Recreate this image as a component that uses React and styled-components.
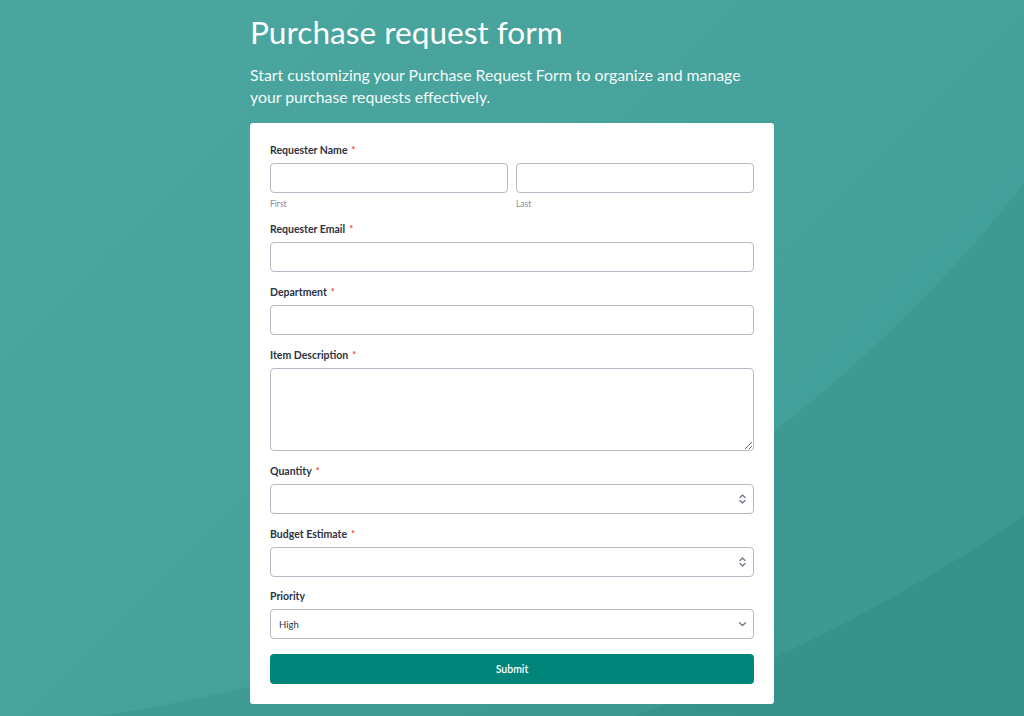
import React from "react";
import styled, { createGlobalStyle } from "styled-components";

const Global = createGlobalStyle`
  * { box-sizing: border-box; }
  html, body { margin: 0; padding: 0; }
  body { font-family: Lato, "Open Sans", sans-serif; }
`;

const Page = styled.div`
  min-height: 100vh;
  width: 100%;
  background:
    radial-gradient(circle 1830px at 0px -1000px, transparent 1829px, rgba(40, 130, 122, 0.3) 1830px),
    radial-gradient(circle 1430px at -100px -700px, transparent 1429px, rgba(50, 138, 130, 0.3) 1430px),
    linear-gradient(135deg, #4ba69e 0%, #47a39c 40%, #42a09a 70%, #3f9d96 100%);
  display: flex;
  justify-content: center;
  padding: 12px 0 12px;
`;

const Column = styled.main`
  width: 524px;
  display: flex;
  flex-direction: column;
`;

const Title = styled.h1`
  margin: 0;
  font-family: Lato, sans-serif;
  font-weight: 400;
  font-size: 31.6px;
  line-height: 40px;
  color: #ffffff;
`;

const Subtitle = styled.p`
  margin: 12px 0 15px;
  font-family: Lato, sans-serif;
  font-size: 15.8px;
  line-height: 22px;
  color: #f4fbfa;
  max-width: 500px;
`;

const Card = styled.form`
  background: #ffffff;
  border-radius: 3px;
  padding: 20px 20px 20px;
  display: flex;
  flex-direction: column;
  gap: 13px;
`;

const Field = styled.div`
  display: flex;
  flex-direction: column;
  margin-top: ${(p) => (p.$tight ? "-1px" : "0")};
`;

const Label = styled.label`
  display: block;
  font-family: Lato, sans-serif;
  font-weight: 700;
  font-size: 10.5px;
  line-height: 14px;
  height: 14px;
  color: #2c3345;
  margin-bottom: 6px;
`;

const Req = styled.span`
  color: #f23a3c;
  font-size: 9px;
  line-height: 0;
  margin-left: 4px;
  vertical-align: 1px;
`;

const Split = styled.div`
  display: grid;
  grid-template-columns: 1fr 1fr;
  gap: 8px;
`;

const Sub = styled.div`
  display: flex;
  flex-direction: column;
`;

const SubLabel = styled.span`
  font-family: Lato, sans-serif;
  font-size: 8.5px;
  line-height: 10px;
  margin-top: 6px;
  color: #868aa0;
`;

const Input = styled.input`
  height: 30px;
  width: 100%;
  border: 1px solid #b6bac7;
  border-radius: 4px;
  background: #fff;
  padding: 0 9px;
  font-family: Lato, sans-serif;
  font-size: 10px;
  color: #2c3345;
  outline: none;
  display: block;
`;

const TextArea = styled.textarea`
  height: 83px;
  width: 100%;
  border: 1px solid #b6bac7;
  border-radius: 4px;
  background: #fff;
  padding: 8px 9px;
  font-family: Lato, sans-serif;
  font-size: 10px;
  resize: vertical;
  outline: none;
  display: block;
`;

const Control = styled.div`
  height: 30px;
  border: 1px solid #b6bac7;
  border-radius: 4px;
  background: #fff;
  display: flex;
  align-items: center;
  justify-content: space-between;
  padding: 0 6px 0 8px;
  font-family: Lato, sans-serif;
  font-size: 9.5px;
  color: #2c3345;
`;

const Icon = styled.svg`
  width: 9px;
  height: 12px;
  color: #6f7688;
  flex: none;
`;

const Button = styled.button`
  margin-top: 2px;
  height: 30px;
  border: none;
  border-radius: 4px;
  background: #00857a;
  color: #ffffff;
  font-family: Lato, sans-serif;
  font-weight: 600;
  font-size: 10.5px;
  cursor: pointer;
`;

const Spinner = () => (
  <Icon viewBox="0 0 9 12" fill="none" stroke="currentColor" strokeWidth="1.3" strokeLinecap="round" strokeLinejoin="round">
    <path d="M2 4.5 L4.5 2 L7 4.5" />
    <path d="M2 7.5 L4.5 10 L7 7.5" />
  </Icon>
);

const Chevron = () => (
  <Icon viewBox="0 0 9 12" fill="none" stroke="currentColor" strokeWidth="1.3" strokeLinecap="round" strokeLinejoin="round">
    <path d="M1.5 4.8 L4.5 7.6 L7.5 4.8" />
  </Icon>
);

const FieldLabel = ({ children, required }) => (
  <Label>
    {children}
    {required && <Req>*</Req>}
  </Label>
);

export default function App() {
  return (
    <>
      <Global />
      <Page>
        <Column>
          <Title>Purchase request form</Title>
          <Subtitle>
            Start customizing your Purchase Request Form to organize and manage your purchase requests effectively.
          </Subtitle>
          <Card onSubmit={(e) => e.preventDefault()}>
            <Field>
              <FieldLabel required>Requester Name</FieldLabel>
              <Split>
                <Sub>
                  <Input />
                  <SubLabel>First</SubLabel>
                </Sub>
                <Sub>
                  <Input />
                  <SubLabel>Last</SubLabel>
                </Sub>
              </Split>
            </Field>
            <Field>
              <FieldLabel required>Requester Email</FieldLabel>
              <Input type="email" />
            </Field>
            <Field>
              <FieldLabel required>Department</FieldLabel>
              <Input />
            </Field>
            <Field>
              <FieldLabel required>Item Description</FieldLabel>
              <TextArea />
            </Field>
            <Field>
              <FieldLabel required>Quantity</FieldLabel>
              <Control>
                <span />
                <Spinner />
              </Control>
            </Field>
            <Field>
              <FieldLabel required>Budget Estimate</FieldLabel>
              <Control>
                <span />
                <Spinner />
              </Control>
            </Field>
            <Field $tight>
              <FieldLabel>Priority</FieldLabel>
              <Control>
                <span>High</span>
                <Chevron />
              </Control>
            </Field>
            <Button type="submit">Submit</Button>
          </Card>
        </Column>
      </Page>
    </>
  );
}
